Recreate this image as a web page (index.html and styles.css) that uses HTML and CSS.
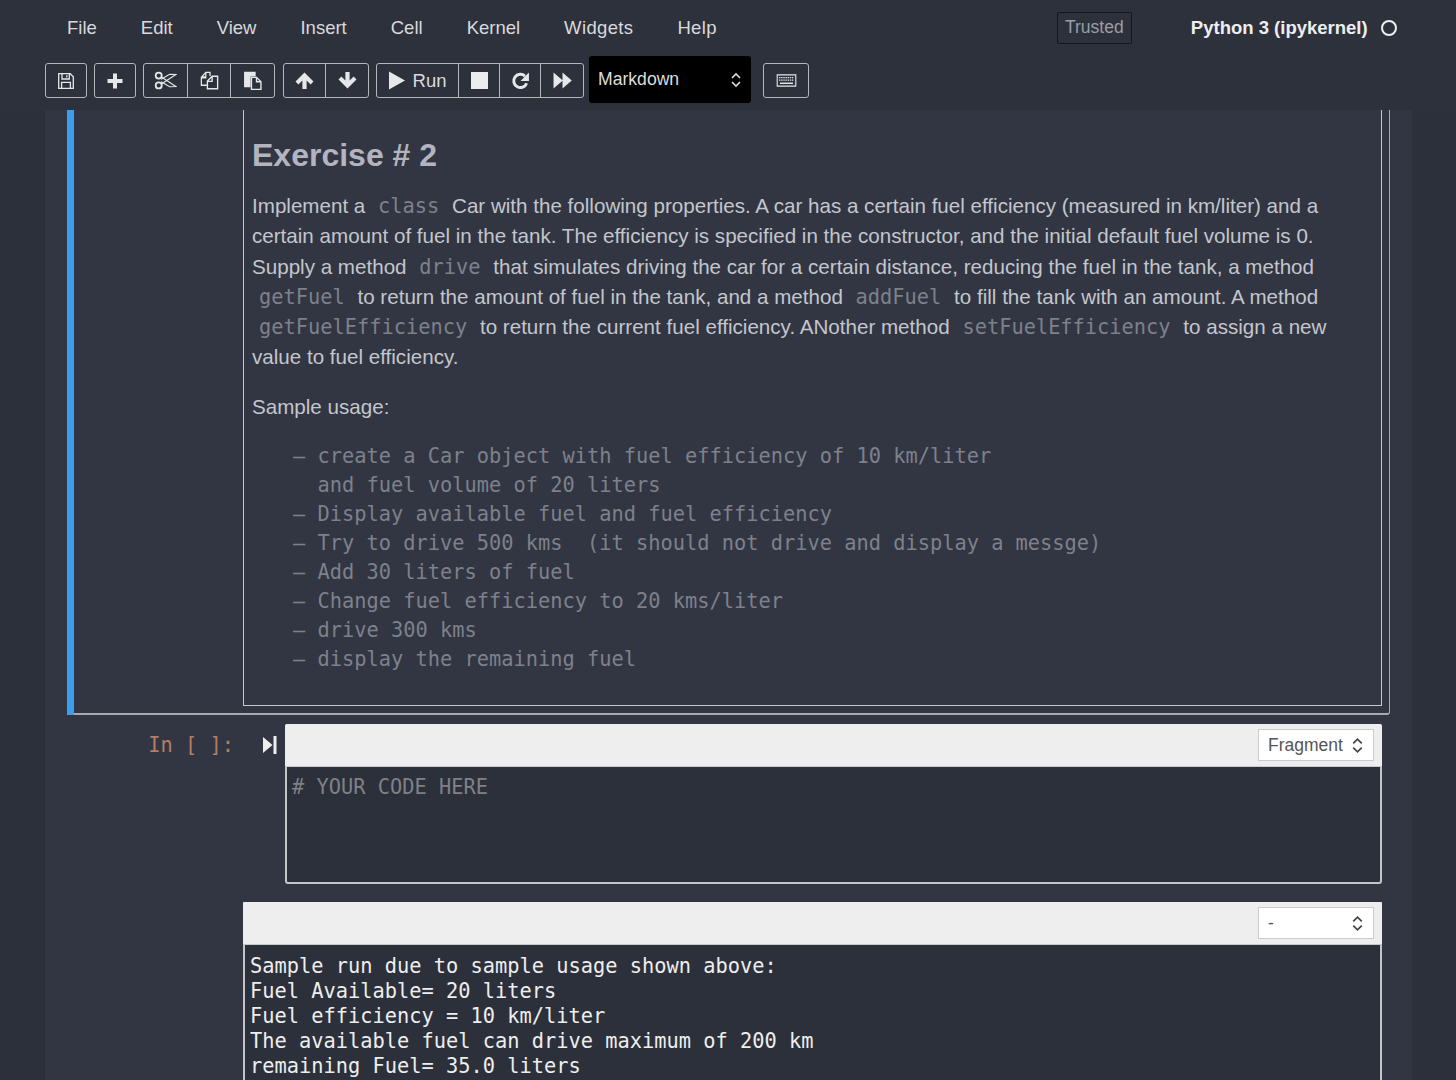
FILE: index.html
```html
<!DOCTYPE html>
<html lang="en">
<head>
<meta charset="utf-8">
<title>Notebook</title>
<link rel="stylesheet" href="styles.css">
</head>
<body>
<header class="header">
  <nav class="menubar">
    <span class="menu-item">File</span>
    <span class="menu-item">Edit</span>
    <span class="menu-item">View</span>
    <span class="menu-item">Insert</span>
    <span class="menu-item">Cell</span>
    <span class="menu-item">Kernel</span>
    <span class="menu-item menu-wide">Widgets</span>
    <span class="menu-item menu-wide">Help</span>
    <span class="trusted">Trusted</span>
    <span class="kernel">Python 3 (ipykernel)</span>
    <span class="kernel-dot"></span>
  </nav>
  <div class="toolbar">
    <div class="btn-group">
      <button class="tbtn w40"><svg viewBox="0 0 18 18" class="ico"><path d="M1.700 1.700h11.500l3.100 3.100v11.500H1.700z M5 1.700v5.300h7.300V1.700 M9.800 3.200v2.300 M4.600 16.300v-6h8.800v6" fill="none" stroke="currentColor" stroke-width="1.300"/></svg></button>
    </div>
    <div class="btn-group">
      <button class="tbtn w40"><svg viewBox="0 0 18 18" class="ico"><path d="M7 1.500h4v5.500h5.500v4H11v5.500H7V11H1.500V7H7z" fill="currentColor"/></svg></button>
    </div>
    <div class="btn-group group-wide">
      <button class="tbtn w43"><svg viewBox="0 0 22 18" class="ico-w"><circle cx="4.500" cy="4.300" r="2.900" fill="none" stroke="currentColor" stroke-width="1.700"/><circle cx="4.500" cy="13.700" r="2.900" fill="none" stroke="currentColor" stroke-width="1.700"/><path d="M7 5.700 21 14.800 15 15 6.800 10.300 M7 12.300 21 3.200 15 3 6.800 7.700" fill="none" stroke="currentColor" stroke-width="1.100"/></svg></button>
      <button class="tbtn w43"><svg viewBox="0 0 18 18" class="ico-lg"><path d="M6 6.500H1.300V6L5.500 1.300h4v3.500 M5.500 1.300V5.500H1.300 M1.300 6v7.500H6.500" fill="none" stroke="currentColor" stroke-width="1.200"/><path d="M11.500 5 7 9.500v7.300h9.700V5z M7 9.800h4.500V5" fill="none" stroke="currentColor" stroke-width="1.300"/></svg></button>
      <button class="tbtn w44"><svg viewBox="0 0 18 18" class="ico-lg"><path d="M1 .8h11v4.400H7.200v10.300H1z" fill="currentColor"/><path d="M8 6h4.800l4.200 4.200v7.300H8z" fill="#2d313c" stroke="currentColor" stroke-width="1.300"/><path d="M12.800 6v4.200H17" fill="none" stroke="currentColor" stroke-width="1.300"/></svg></button>
    </div>
    <div class="btn-group">
      <button class="tbtn w41"><svg viewBox="0 0 18 18" class="ico-lg"><path d="M9 1.500 17.500 10 14.800 12.700 11 8.900V17H7V8.900L3.200 12.700.5 10z" fill="currentColor"/></svg></button>
      <button class="tbtn w43"><svg viewBox="0 0 18 18" class="ico-lg"><path d="M9 16.500 17.500 8 14.800 5.300 11 9.100V1H7V9.100L3.200 5.300.5 8z" fill="currentColor"/></svg></button>
    </div>
    <div class="btn-group group-run">
      <button class="tbtn w81"><svg viewBox="0 0 16 18" class="ico-play"><path d="M0 0 16 9 0 18z" fill="currentColor"/></svg><span class="run-label">Run</span></button>
      <button class="tbtn w41"><span class="stop"></span></button>
      <button class="tbtn w41"><svg viewBox="0 0 18 18" class="ico-lg"><path d="M14.800 11.500A6.300 6.300 0 1 1 13.200 4.800" fill="none" stroke="currentColor" stroke-width="2.800"/><path d="M17 1.500v8h-8z" fill="currentColor"/></svg></button>
      <button class="tbtn w43"><svg viewBox="0 0 18 18" class="ico-lg"><path d="M.5 1.500 9.300 9 .5 16.500z M9 1.500 17.800 9 9 16.500z" fill="currentColor"/></svg></button>
    </div>
    <div class="cell-type"><span>Markdown</span><svg viewBox="0 0 12 16" class="updown"><path d="M2 6 6 2 10 6 M2 10 6 14 10 10" fill="none" stroke="currentColor" stroke-width="1.600"/></svg></div>
    <div class="btn-group">
      <button class="tbtn w44"><svg viewBox="0 0 22 14" class="ico-kb"><path d="M1 1h20v12H1z" fill="none" stroke="currentColor" stroke-width="1.200"/><path d="M3 4h16M3 6.500h16" stroke="currentColor" stroke-width="1.400" stroke-dasharray="1.500 .8"/><path d="M4 10h14" stroke="currentColor" stroke-width="1.600"/></svg></button>
    </div>
  </div>
</header>

<main class="notebook">
  <section class="selected-cell">
    <div class="gutter-blue"></div>
    <div class="prompt-space"></div>
    <article class="md">
      <h1 class="md-title">Exercise # 2</h1>
      <p class="md-p">Implement a <code>class</code> Car with the following properties. A car has a certain fuel efficiency (measured in km/liter) and a<br>certain amount of fuel in the tank. The efficiency is specified in the constructor, and the initial default fuel volume is 0.<br>Supply a method <code>drive</code> that simulates driving the car for a certain distance, reducing the fuel in the tank, a method<br><code>getFuel</code> to return the amount of fuel in the tank, and a method <code>addFuel</code> to fill the tank with an amount. A method<br><code>getFuelEfficiency</code> to return the current fuel efficiency. ANother method <code>setFuelEfficiency</code> to assign a new<br>value to fuel efficiency.</p>
      <p class="md-p md-sample">Sample usage:</p>
<pre class="md-pre">    – create a Car object with fuel efficiency of 10 km/liter
      and fuel volume of 20 liters
    – Display available fuel and fuel efficiency
    – Try to drive 500 kms  (it should not drive and display a messge)
    – Add 30 liters of fuel
    – Change fuel efficiency to 20 kms/liter
    – drive 300 kms
    – display the remaining fuel</pre>
    </article>
  </section>

  <section class="code-cell">
    <div class="code-prompt">In [ ]:</div>
    <svg viewBox="0 0 14 18" class="step-ico"><path d="M0 1 9.500 9 0 17z M10.500 0H13.500V18H10.500z" fill="currentColor"/></svg>
    <div class="code-box">
      <div class="tag-bar"><div class="tag-select"><span>Fragment</span><svg viewBox="0 0 12 16" class="updown-dark"><path d="M2 6 6 2 10 6 M2 10 6 14 10 10" fill="none" stroke="currentColor" stroke-width="1.600"/></svg></div></div>
      <pre class="code-input"># YOUR CODE HERE</pre>
    </div>
  </section>

  <section class="output-cell">
    <div class="output-box">
      <div class="tag-bar"><div class="tag-select"><span>-</span><svg viewBox="0 0 12 16" class="updown-dark"><path d="M2 6 6 2 10 6 M2 10 6 14 10 10" fill="none" stroke="currentColor" stroke-width="1.600"/></svg></div></div>
<pre class="output-text">Sample run due to sample usage shown above:
Fuel Available= 20 liters
Fuel efficiency = 10 km/liter
The available fuel can drive maximum of 200 km
remaining Fuel= 35.0 liters</pre>
    </div>
  </section>
</main>
</body>
</html>
```
FILE: styles.css
```css
* { box-sizing: border-box; }
html, body { margin: 0; padding: 0; height: 1080px; overflow: hidden; }
body { background: #2c303b; font-family: "Liberation Sans", Arial, sans-serif; color: #c8cbd2; }

.header { height: 110px; background: #2d313c; padding: 0 0 0 45px; }
.menubar { display: flex; align-items: center; height: 56px; font-size: 18.500px; color: #d8dade; }
.menu-item { margin-left: 22px; margin-right: 22px; }
.menu-wide { letter-spacing: 0.350px; }
.trusted { margin-left: 318px; width: 75px; height: 32px; margin-top: -1px; border: 1px solid #14161c; border-radius: 2px; font-size: 17.500px; color: #9a9da5; display: flex; align-items: center; justify-content: center; }
.kernel { margin-left: 59px; font-weight: 700; font-size: 18.500px; color: #eceef0; }
.kernel-dot { margin-left: 13px; width: 16px; height: 16px; border: 2px solid #eceef0; border-radius: 50%; }

.toolbar { display: flex; align-items: flex-start; height: 54px; }
.btn-group { display: flex; margin-top: 7px; margin-right: 7px; border: 1px solid #b4b6ba; border-radius: 3px; height: 35px; }
.group-wide { margin-right: 8px; }
.group-run { margin-right: 5px; }
.tbtn { background: none; border: none; padding: 0; height: 100%; display: flex; align-items: center; justify-content: center; color: #e6e7e9; border-left: 1px solid #b4b6ba; font-family: inherit; }
.tbtn:first-child { border-left: none; }
.w40 { width: 40px; } .w41 { width: 41px; } .w42 { width: 42px; } .w43 { width: 43px; } .w44 { width: 44px; } .w81 { width: 81px; }
.ico { width: 18px; height: 18px; }
.ico-lg { width: 19px; height: 19px; }
.ico-w { width: 23px; height: 19px; }
.ico-play { width: 16px; height: 19px; margin-right: 8px; }
.ico-kb { width: 21px; height: 13px; }
.run-label { font-size: 18.500px; color: #d8dade; }
.stop { width: 17px; height: 17px; background: #ececec; }
.cell-type { display: flex; align-items: center; justify-content: space-between; width: 162px; height: 47px; margin-right: 12px; background: #000; border-radius: 3px; padding: 0 9px 0 9px; font-size: 17.600px; color: #dddddd; }
.updown { width: 12px; height: 16px; color: #dddddd; }

.notebook { width: 1367px; margin-left: 45px; height: 970px; background: #323643; overflow: hidden; padding-left: 22px; }
.selected-cell { width: 1323px; height: 605px; display: flex; border-bottom: 2px solid #a8a9ac; border-right: 1px solid #a8a9ac; border-radius: 0 0 3px 0; }
.gutter-blue { width: 7px; background: #3b9ff0; margin-bottom: -2px; }
.prompt-space { width: 169px; }
.md { width: 1139px; height: 596px; border: 1px solid #c6c7c9; border-top: none; padding: 0 8px; }
.md-title { margin: 27px 0 0; font-size: 32px; line-height: 36px; font-weight: 700; color: #b2b5bf; }
.md-p { margin: 18px 0 0; font-size: 20.600px; line-height: 30.250px; color: #c3c6cc; white-space: nowrap; }
.md-sample { margin-top: 19px; }
.md-p code { font-family: "DejaVu Sans Mono", monospace; font-size: 20.350px; color: #7d818b; padding: 0 7px; }
.md-pre { margin: 20px 0 0; font-family: "DejaVu Sans Mono", monospace; font-size: 20.350px; line-height: 29px; color: #7d818b; margin-left: -8px; }

.code-cell { margin-top: 9px; display: flex; height: 160px; }
.code-prompt { width: 167px; padding-top: 9px; text-align: right; font-family: "DejaVu Sans Mono", monospace; font-size: 20.350px; line-height: 25px; color: #b47e63; }
.step-ico { margin: 12px 0 0 29px; width: 14px; height: 18px; color: #eeeeee; flex: none; }
.code-box { margin-left: 8px; width: 1097px; height: 160px; border: 2px solid #c4c5c8; border-top: none; border-radius: 3px; background: #2c303b; }
.tag-bar { height: 43px; background: #eeeeee; border-bottom: 1px solid #c9c9c9; display: flex; align-items: center; justify-content: flex-end; border-radius: 2px 2px 0 0; margin: 0 -2px; padding-right: 8px; }
.tag-select { width: 116px; height: 32px; background: #fff; border: 1px solid #cccccc; display: flex; align-items: center; justify-content: space-between; padding: 0 9px; font-size: 17.500px; color: #555; }
.updown-dark { width: 13px; height: 17px; color: #444; }
.code-input { margin: 0; padding: 8px 5px; font-family: "DejaVu Sans Mono", monospace; font-size: 20.350px; line-height: 25px; color: #7f8186; }

.output-cell { margin-top: 18px; margin-left: 176px; }
.output-box { width: 1139px; height: 200px; border-left: 2px solid #c4c5c8; border-right: 2px solid #c4c5c8; background: #2c303b; }
.output-text { margin: 0; padding: 9px 5px; font-family: "DejaVu Sans Mono", monospace; font-size: 20.350px; line-height: 25px; color: #eeeeee; }
```
